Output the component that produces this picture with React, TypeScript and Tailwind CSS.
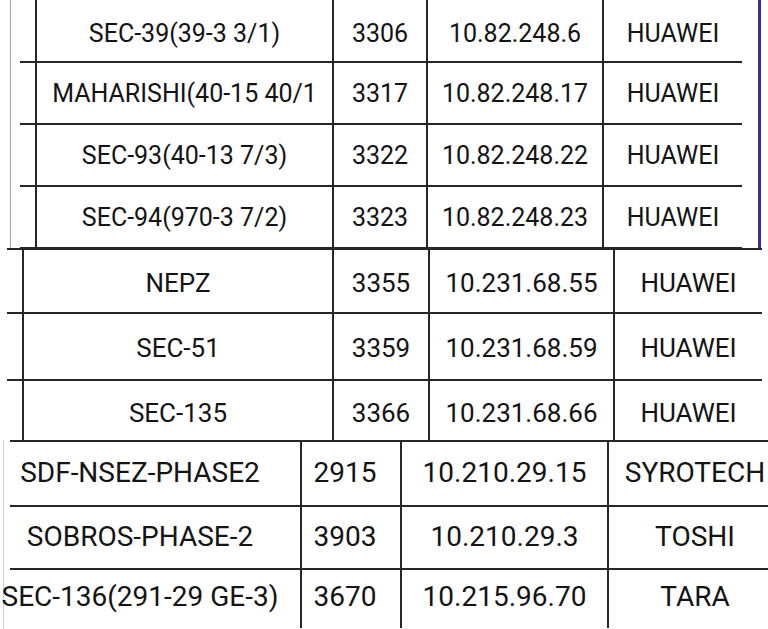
import React from 'react'

type Row = { name: string; port: string; ip: string; vendor: string; h: string; pad: string }

const line = 'border-[#262626]'

const first: Row[] = [
  { name: 'SEC-39(39-3 3/1)', port: '3306', ip: '10.82.248.6', vendor: 'HUAWEI', h: 'h-[63px]', pad: 'pt-[7px]' },
  { name: 'MAHARISHI(40-15 40/1', port: '3317', ip: '10.82.248.17', vendor: 'HUAWEI', h: 'h-[62px]', pad: 'pt-[2px]' },
  { name: 'SEC-93(40-13 7/3)', port: '3322', ip: '10.82.248.22', vendor: 'HUAWEI', h: 'h-[62px]', pad: 'pt-[2px]' },
  { name: 'SEC-94(970-3 7/2)', port: '3323', ip: '10.82.248.23', vendor: 'HUAWEI', h: 'h-[62px]', pad: 'pt-[1px]' }
]

const second: Row[] = [
  { name: 'NEPZ', port: '3355', ip: '10.231.68.55', vendor: 'HUAWEI', h: 'h-[66px] border-t-2 border-b-2', pad: 'pt-[5px]' },
  { name: 'SEC-51', port: '3359', ip: '10.231.68.59', vendor: 'HUAWEI', h: 'h-[67px] border-b-2', pad: 'pt-[3px]' },
  { name: 'SEC-135', port: '3366', ip: '10.231.68.66', vendor: 'HUAWEI', h: 'h-[59px]', pad: 'pt-[6px]' }
]

const third: Row[] = [
  { name: 'SDF-NSEZ-PHASE2', port: '2915', ip: '10.210.29.15', vendor: 'SYROTECH', h: 'h-[67px] border-t-2 border-b-2', pad: 'pb-[1px]' },
  { name: 'SOBROS-PHASE-2', port: '3903', ip: '10.210.29.3', vendor: 'TOSHI', h: 'h-[63px] border-b-2', pad: 'pb-[2px]' },
  { name: 'SEC-136(291-29 GE-3)', port: '3670', ip: '10.215.96.70', vendor: 'TARA', h: 'h-[58px]', pad: 'pb-[4px]' }
]

const cell = 'flex shrink-0 items-center justify-center whitespace-nowrap'

export default function App() {
  return (
    <div
      className="h-[629px] w-[768px] overflow-hidden bg-white text-[#141414]"
      style={{ fontFamily: 'Roboto, "Noto Sans", sans-serif' }}
    >
      {/* first capture, framed by the purple edges */}
      <div className="flex h-[249px] w-[768px] text-[25px]">
        <div className="w-[10px] shrink-0" />
        <div className="w-px shrink-0 bg-[#a79ddd]" />
        <div className="w-[9px] shrink-0" />
        <div className="flex w-[722px] shrink-0 flex-col">
          {first.map((r) => (
            <div key={r.name} className={`flex border-b-2 ${line} ${r.h}`}>
              <div className="w-[15px] shrink-0" />
              <div className={`${cell} w-[297px] border-l-2 ${line} ${r.pad}`}>{r.name}</div>
              <div className={`${cell} w-[94px] border-l-2 ${line} ${r.pad}`}>{r.port}</div>
              <div className={`${cell} w-[176px] border-l-2 ${line} ${r.pad}`}>{r.ip}</div>
              <div className={`${cell} w-[140px] border-l-2 ${line} ${r.pad}`}>{r.vendor}</div>
            </div>
          ))}
        </div>
        <div className="w-[16px] shrink-0" />
        <div className="min-w-[3px] w-[3px] shrink-0 bg-indigo-800" />
      </div>

      {/* second capture */}
      <div className="-mt-px flex h-[192px] text-[26px]">
        <div className="w-[7px] shrink-0" />
        <div className="flex w-[755px] shrink-0 flex-col">
          {second.map((r) => (
            <div key={r.name} className={`flex ${line} ${r.h}`}>
              <div className="w-[15px] shrink-0" />
              <div className={`${cell} w-[310px] border-l-2 ${line} ${r.pad}`}>{r.name}</div>
              <div className={`${cell} w-[96px] border-l-2 ${line} ${r.pad}`}>{r.port}</div>
              <div className={`${cell} w-[185px] border-l-2 ${line} ${r.pad}`}>{r.ip}</div>
              <div className={`${cell} w-[149px] border-l-2 ${line} ${r.pad}`}>{r.vendor}</div>
            </div>
          ))}
        </div>
      </div>

      {/* third capture */}
      <div className="flex h-[189px] text-[28px]">
        <div className="w-[3px] shrink-0" />
        <div className="w-px shrink-0 bg-[#cfc8e6]" />
        <div className="w-[6px] shrink-0" />
        <div className="flex w-[771px] shrink-0 flex-col">
          {third.map((r) => (
            <div key={r.name} className={`flex ${line} ${r.h}`}>
              <div className={`${cell} w-[290px] pr-[30px] ${r.pad}`}>{r.name}</div>
              <div className={`${cell} w-[100px] border-l-2 pr-[12px] ${line} ${r.pad}`}>{r.port}</div>
              <div className={`${cell} w-[207px] border-l-2 ${line} ${r.pad}`}>{r.ip}</div>
              <div className={`${cell} w-[174px] border-l-2 ${line} ${r.pad}`}>{r.vendor}</div>
            </div>
          ))}
        </div>
      </div>
    </div>
  )
}
